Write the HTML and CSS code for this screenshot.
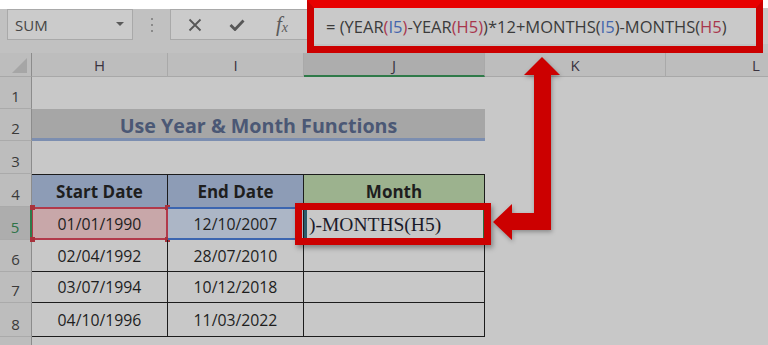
FILE: index.html
```html
<!DOCTYPE html>
<html lang="en">
<head>
  <meta charset="UTF-8" />
  <title>Use Year &amp; Month Functions</title>
  <link rel="stylesheet" href="styles.css">
</head>
<body>
  <div id="app">
    <div class="topStrip"></div>

    <div class="toolbar">
      <div class="nameBox">
        <span>SUM</span>
        <span class="caret"></span>
      </div>
      <div class="grip"><i></i><i></i><i></i></div>
      <div class="fnButtons">
        <svg class="icon" width="14" height="14" viewBox="0 0 14 14">
          <path d="M1.5 1.5 L12.5 12.5 M12.5 1.5 L1.5 12.5" stroke="#575757" stroke-width="1.8" fill="none" />
        </svg>
        <svg class="icon" width="16" height="12" viewBox="0 0 16 12">
          <path d="M1.5 6 L6 10.5 L14.5 1.5" stroke="#575757" stroke-width="2.8" fill="none" />
        </svg>
        <span class="fx"><i>f</i><sub>x</sub></span>
      </div>
      <div class="formulaBar">
        <span>= (YEAR<span class="par">(</span><span class="refBlue">I5</span><span class="par">)</span>-YEAR<span class="refRed">(H5)</span>)*12+MONTHS(<span class="refBlue">I5</span>)-MONTHS(<span class="refRed">H5</span>)</span>
      </div>
    </div>

    <div class="sheet">
      <div class="corner"><span></span></div>
      <div class="colHead">H</div>
      <div class="colHead">I</div>
      <div class="colHead active">J</div>
      <div class="colHead">K</div>
      <div class="colHead">L</div>

      <div class="rowHead">1</div>
      <div class="cell"></div><div class="cell"></div><div class="cell"></div><div class="cell"></div><div class="cell"></div>

      <div class="rowHead">2</div>
      <div class="cell title">Use Year &amp; Month Functions</div>
      <div class="cell"></div><div class="cell"></div>

      <div class="rowHead">3</div>
      <div class="cell"></div><div class="cell"></div><div class="cell"></div><div class="cell"></div><div class="cell"></div>

      <div class="rowHead">4</div>
      <div class="cell th blue">Start Date</div>
      <div class="cell th blue">End Date</div>
      <div class="cell th green">Month</div>
      <div class="cell"></div><div class="cell"></div>

      <div class="rowHead active">5</div>
      <div class="cell td pickRed">
        01/01/1990
        <b class="handle tl"></b><b class="handle tr"></b><b class="handle bl"></b><b class="handle br"></b>
      </div>
      <div class="cell td pickBlue">12/10/2007</div>
      <div class="cell td editing">)-MONTHS(H5)</div>
      <div class="cell"></div><div class="cell"></div>

      <div class="rowHead">6</div>
      <div class="cell td">02/04/1992</div>
      <div class="cell td">28/07/2010</div>
      <div class="cell td"></div>
      <div class="cell"></div><div class="cell"></div>

      <div class="rowHead">7</div>
      <div class="cell td">03/07/1994</div>
      <div class="cell td">10/12/2018</div>
      <div class="cell td"></div>
      <div class="cell"></div><div class="cell"></div>

      <div class="rowHead">8</div>
      <div class="cell td">04/10/1996</div>
      <div class="cell td">11/03/2022</div>
      <div class="cell td"></div>
      <div class="cell"></div><div class="cell"></div>

      <div class="rowHead"></div>
      <div class="cell"></div><div class="cell"></div><div class="cell"></div><div class="cell"></div><div class="cell"></div>
    </div>

    <!-- annotations drawn over the sheet -->
    <div class="callout formulaCallout"></div>
    <div class="callout cellCallout"></div>
    <svg class="arrow" width="768" height="345" viewBox="0 0 768 345">
      <polygon points="542,57 560,75 551,75 551,230 512,230 512,240 493,222 512,204 512,213 534,213 534,75 524,75" fill="#cc0000" />
    </svg>
  </div>
</body>
</html>
```

FILE: styles.css
```css
html, body {
  height: 100%;
  margin: 0;
  background: #c8c8c8;
  font-family: 'Open Sans', sans-serif;
  overflow: hidden;
}

#app {
  position: relative;
  width: 768px;
  height: 345px;
  overflow: hidden;
}

.topStrip {
  height: 9px;
  background: #fff;
}

.toolbar {
  display: flex;
  align-items: flex-start;
  height: 44px;
  background: #c1c1c1;
}

.nameBox {
  display: flex;
  align-items: center;
  justify-content: space-between;
  box-sizing: border-box;
  width: 126px;
  height: 31px;
  margin-left: 7px;
  padding: 0 8px 0 7px;
  background: #cbcbcb;
  border: 1px solid #a9a9a9;
  font-size: 15px;
  color: #454545;
}

.caret {
  width: 0;
  height: 0;
  border-left: 4px solid transparent;
  border-right: 4px solid transparent;
  border-top: 4px solid #5a5a5a;
  margin-top: -2px;
}

.grip {
  display: flex;
  flex-direction: column;
  gap: 4px;
  margin: 9px 0 0 18px;
}

.grip i {
  display: block;
  width: 2px;
  height: 2px;
  background: #8a8a8a;
}

.fnButtons {
  display: flex;
  align-items: center;
  box-sizing: border-box;
  width: 142px;
  height: 31px;
  margin-left: 17px;
  padding-left: 17px;
  background: #cbcbcb;
  border: 1px solid #a9a9a9;
}

.fnButtons .icon {
  margin-right: 27px;
}

.fnButtons .icon + .icon {
  margin-right: 31px;
}

.fx {
  font-family: 'Liberation Serif', serif;
  font-size: 21px;
  color: #5a5a5a;
  line-height: 1;
}

.fx sub {
  font-style: italic;
  font-size: 14px;
  vertical-align: -1px;
}

.formulaBar {
  flex: 1;
  display: flex;
  align-items: center;
  height: 36px;
  margin-top: -1px;
  padding-left: 14px;
  background: #c9c9c9;
  font-size: 16.5px;
  color: #3b3b3b;
  white-space: nowrap;
}

.formulaBar .par,
.formulaBar .refRed {
  color: #a8364d;
}

.formulaBar .refBlue {
  color: #4466ad;
}

/* sheet */

.sheet {
  display: grid;
  grid-template-columns: 32px 136px 136px 181px 181px 181px;
  grid-template-rows: 24px 32px 32px 33px 33px 33px 32px 31px 34px 32px;
  background: #c8c8c8;
}

.corner {
  position: relative;
  background: #bdbdbd;
  border-right: 1px solid #8c8c8c;
  border-bottom: 1px solid #a8a8a8;
  box-sizing: border-box;
}

.corner span {
  position: absolute;
  right: 4px;
  bottom: 3px;
  width: 0;
  height: 0;
  border-left: 15px solid transparent;
  border-bottom: 15px solid #a6a6a6;
}

.colHead {
  display: flex;
  align-items: center;
  justify-content: center;
  box-sizing: border-box;
  background: #bdbdbd;
  border-right: 1px solid #a9a9a9;
  border-bottom: 1px solid #a8a8a8;
  font-size: 15px;
  color: #3a333f;
  padding-top: 1px;
}

.colHead.active {
  background: #adadad;
  border-bottom: 2px solid #2f7a49;
}

.rowHead {
  display: flex;
  align-items: flex-end;
  justify-content: center;
  box-sizing: border-box;
  padding-bottom: 2px;
  background: #bdbdbd;
  border-right: 1px solid #8c8c8c;
  border-bottom: 1px solid #aaaaaa;
  font-size: 15px;
  color: #3a3a3a;
}

.rowHead.active {
  background: #adadad;
  color: #2e7347;
  border-right: 2px solid #2f7a49;
}

.cell {
  position: relative;
  display: flex;
  align-items: center;
  justify-content: center;
  box-sizing: border-box;
  color: #1e1e1e;
}

.title {
  grid-column: span 3;
  padding-top: 3px;
  background: #a6a6a6;
  border-bottom: 3px solid #7c8eb0;
  font-size: 19.7px;
  font-weight: bold;
  color: #4b5875;
}

.th {
  font-size: 17px;
  font-weight: bold;
  border-top: 1px solid #1c1c1c;
  border-right: 1px solid #1c1c1c;
}

.th.blue {
  background: #8d9cb6;
}

.th.green {
  background: #9cb28e;
}

.td {
  font-size: 15.8px;
  border-right: 1px solid #1c1c1c;
  border-bottom: 1px solid #1c1c1c;
}

.td.pickRed {
  background: #c8a7a9;
  border: 2px solid #b2394a;
  border-left-width: 1px;
}

.td.pickBlue {
  background: #acb6c6;
  border-top: 2px solid #3b65b0;
  border-bottom: 2px solid #3b65b0;
}

.td.editing {
  justify-content: flex-start;
  padding: 2px 0 0 2px;
  border: 2px solid #2d6b3c;
  border-left: 3px solid #2b5a6a;
  font-family: 'Liberation Serif', serif;
  font-size: 19.5px;
  color: #1a1a2a;
}

.handle {
  position: absolute;
  width: 5px;
  height: 5px;
  background: #a8323c;
}

.handle.tl { top: -4px; left: -3px; }
.handle.tr { top: -4px; right: -4px; }
.handle.bl { bottom: -4px; left: -3px; }
.handle.br { bottom: -4px; right: -4px; }

/* red annotations */

.callout {
  position: absolute;
  box-sizing: border-box;
  border: 7px solid #cc0000;
}

.formulaCallout {
  left: 307px;
  top: 0;
  width: 456px;
  height: 53px;
  border-top: 8px solid #e80000;
}

.cellCallout {
  left: 295px;
  top: 203px;
  width: 196px;
  height: 42px;
  box-shadow: 2px 3px 5px rgba(0, 0, 0, 0.35);
}

.arrow {
  position: absolute;
  left: 0;
  top: 0;
  filter: drop-shadow(1px 2px 2px rgba(0, 0, 0, 0.3));
}
```
